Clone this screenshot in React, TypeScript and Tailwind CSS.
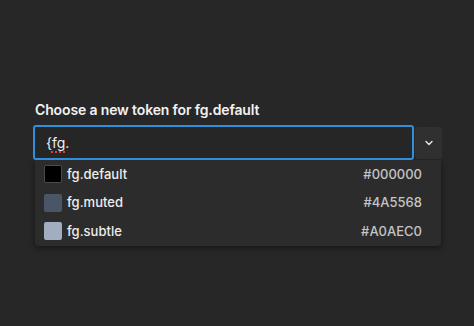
import React from "react";

const rows = [
  { name: "fg.default", hex: "#000000", swatch: "bg-[#000000] border border-[#4a4a4a]" },
  { name: "fg.muted", hex: "#4A5568", swatch: "bg-[#4A5568]" },
  { name: "fg.subtle", hex: "#A0AEC0", swatch: "bg-[#A0AEC0]" },
];

export default function App() {
  return (
    <div className="w-[474px] h-[326px] bg-[#272727] overflow-hidden font-['Inter',sans-serif] pt-[101px] pl-[33px]">
      <div className="pl-[2px] text-[14px] leading-[18px] font-semibold tracking-[-0.01em] text-[#f2f2f2]">
        Choose a new token for fg.default
      </div>
      <div className="mt-[6px] flex items-center w-[409px]">
        <div className="w-[381px] h-[35px] rounded-[3px] border-2 border-[#2f8fdc] bg-[#262626] flex items-center pl-[11px] text-[14px] text-[#f0f0f0]">
          <span>
            {"{"}
            <span className="underline decoration-dotted decoration-[#e04040] decoration-2 underline-offset-[3px]">fg</span>.
          </span>
        </div>
        <div className="ml-[1px] w-[27px] h-[32px] rounded-[3px] bg-[#303030] flex items-center justify-center">
          <svg width="10" height="10" viewBox="0 0 10 10" fill="none">
            <path d="M2 3.5 L5 6.5 L8 3.5" stroke="#e8e8e8" strokeWidth="1.4" strokeLinecap="round" strokeLinejoin="round" />
          </svg>
        </div>
      </div>
      <div className="ml-[2px] w-[406px] bg-[#2c2c2c] rounded-b-[4px] shadow-[0_2px_6px_rgba(0,0,0,0.45)]">
        {rows.map((r) => (
          <div key={r.name} className="h-[28.5px] flex items-center pl-[9px] pr-[19px]">
            <div className={`w-[18px] h-[18px] rounded-[2px] ${r.swatch}`} />
            <div className="ml-[5px] text-[13px] font-medium text-[#eeeeee]">{r.name}</div>
            <div className="ml-auto text-[13px] font-medium text-[#c4c4c4]">{r.hex}</div>
          </div>
        ))}
      </div>
    </div>
  );
}
